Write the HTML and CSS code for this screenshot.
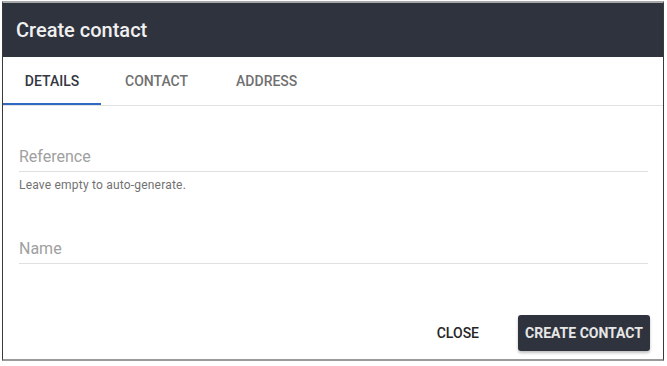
FILE: index.html
```html
<!DOCTYPE html>
<html>
<head>
<meta charset="utf-8">
<link rel="stylesheet" href="styles.css">
</head>
<body>
<div class="dialog">
  <div class="header">Create contact</div>
  <div class="tabs">
    <div class="tab active">Details</div>
    <div class="tab">Contact</div>
    <div class="tab">Address</div>
  </div>
  <div class="content">
    <div class="field first">
      <div class="input">Reference</div>
      <div class="helper">Leave empty to auto-generate.</div>
    </div>
    <div class="field second">
      <div class="input">Name</div>
    </div>
  </div>
  <div class="actions">
    <button class="btn flat">Close</button>
    <button class="btn raised">Create contact</button>
  </div>
</div>
</body>
</html>
```

FILE: styles.css
```css
html, body {
  margin: 0;
  background: #ffffff;
}
body {
  padding: 1px 0 0 2px;
  font-family: Roboto, "Liberation Sans", sans-serif;
}
.dialog {
  width: 660px;
  height: 356px;
  border-top: 2px solid #a8a8a8;
  border-left: 1px solid #3a3a3a;
  border-right: 1px solid #3a3a3a;
  border-bottom: 2px solid #9a9a9a;
  display: flex;
  flex-direction: column;
  background: #fff;
}
.header {
  height: 54px;
  flex: none;
  background: #2f333e;
  color: #f0f0f0;
  font-size: 20px;
  font-weight: 500;
  display: flex;
  align-items: center;
  padding: 0 16px 0 13px;
}
.tabs {
  display: flex;
  height: 48px;
  flex: none;
  border-bottom: 1px solid #e2e2e2;
}
.tab {
  box-sizing: border-box;
  height: 48px;
  padding: 2px 24px 0;
  display: flex;
  align-items: center;
  justify-content: center;
  font-size: 14px;
  font-weight: 500;
  text-transform: uppercase;
  color: #707070;
  border-bottom: 2px solid transparent;
}
.tab.active {
  width: 98px;
  padding: 2px 0 0 0;
  color: #34373f;
  border-bottom-color: #2f69c4;
}
.content {
  padding: 0 15px 0 16px;
}
.field.first {
  margin-top: 37px;
}
.field.second {
  margin-top: 43px;
}
.input {
  height: 28px;
  line-height: 28px;
  font-size: 16px;
  color: #a0a0a0;
  border-bottom: 1px solid #e0e0e0;
}
.helper {
  margin-top: 6px;
  font-size: 12px;
  line-height: 14px;
  letter-spacing: 0.2px;
  color: #727272;
}
.actions {
  margin-top: auto;
  display: flex;
  justify-content: flex-end;
  align-items: center;
  padding: 0 13px 8px 0;
  gap: 28px;
}
.btn {
  font-family: Roboto, "Liberation Sans", sans-serif;
  font-size: 14px;
  font-weight: 500;
  text-transform: uppercase;
  border: none;
  height: 36px;
  border-radius: 3px;
  cursor: pointer;
}
.btn.flat {
  background: transparent;
  color: #262626;
  padding: 0 11px;
}
.btn.raised {
  background: #2f333e;
  color: #e6e6e6;
  font-weight: 700;
  padding: 0 7px;
  box-shadow: 0 2px 3px rgba(0,0,0,0.25);
}
```
